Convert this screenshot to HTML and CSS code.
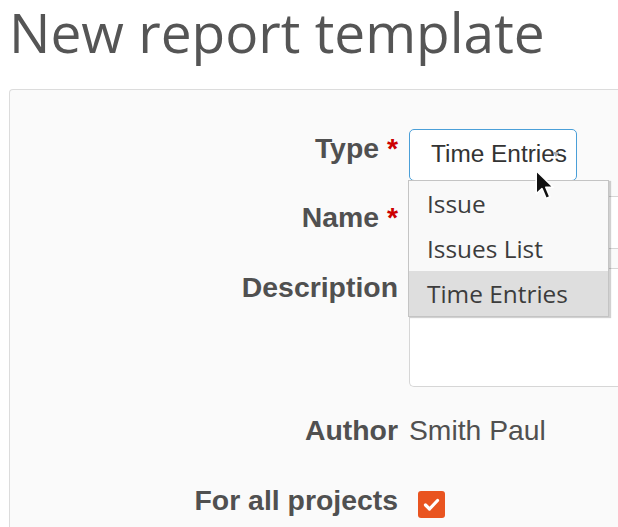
FILE: index.html
```html
<!DOCTYPE html>
<html lang="en">
<head>
    <meta charset="UTF-8">
    <meta name="viewport" content="width=device-width, initial-scale=1.0">
    <title>New report template</title>
    <link rel="stylesheet" href="styles.css">
</head>
<body>
    <h1 class="page-title">New report template</h1>

    <div class="box">
        <div class="row row-type">
            <label class="field-label">Type <span class="required">*</span></label>
            <div class="select-wrap">
                <div class="select">Time Entries</div>
                <ul class="select-menu">
                    <li>Issue</li>
                    <li>Issues List</li>
                    <li class="active">Time Entries</li>
                </ul>
                <!-- mouse pointer over the open list -->
                <svg class="cursor" width="22" height="32" viewBox="0 0 13 20">
                    <path d="M1 1 L1 15.5 L4.6 12.3 L7.2 18.4 L9.6 17.4 L7 11.4 L11.6 11.4 Z" fill="#111" stroke="#fff" stroke-width="1" stroke-linejoin="round"/>
                </svg>
            </div>
        </div>

        <div class="row row-name">
            <label class="field-label">Name <span class="required">*</span></label>
            <div class="input"></div>
        </div>

        <div class="row row-desc">
            <label class="field-label">Description</label>
            <div class="textarea"></div>
        </div>

        <div class="row row-author">
            <label class="field-label">Author</label>
            <div class="value">Smith Paul</div>
        </div>

        <div class="row row-public">
            <label class="field-label">For all projects</label>
            <div class="checkbox">
                <svg width="27" height="27" viewBox="0 0 27 27">
                    <path d="M7.5 14 L11.5 18 L19.5 9.5" fill="none" stroke="#fff" stroke-width="3.2" stroke-linecap="round" stroke-linejoin="round"/>
                </svg>
            </div>
        </div>
    </div>
</body>
</html>
```

FILE: styles.css
```css
body {
    margin: 0;
    background: #fff;
    color: #333;
    font-family: "Liberation Sans", Arial, sans-serif;
    overflow: hidden;
}
.page-title {
    margin: 0 0 25px 0;
    padding-left: 9px;
    font-family: "Open Sans", sans-serif;
    font-weight: normal;
    font-size: 55px;
    line-height: 64px;
    color: #555;
    white-space: nowrap;
}
.box {
    margin-left: 9px;
    border: 1px solid #dcdcdc;
    border-right: none;
    border-radius: 4px 0 0 4px;
    background: #fafafa;
    padding-top: 39px;
    height: 460px;
}
.row {
    display: grid;
    grid-template-columns: 388px 1fr;
    column-gap: 11px;
}
.field-label {
    text-align: right;
    font-weight: bold;
    font-size: 28.4px;
    line-height: 32px;
    color: #505050;
    padding-top: 3px;
    white-space: nowrap;
}
.required {
    color: #c00;
}
.row-type {
    margin-bottom: 15px;
}
.row-name {
    margin-bottom: 19px;
}
.row-name .field-label {
    padding-top: 5px;
}
.row-desc {
    margin-bottom: 27px;
}
.row-author {
    margin-bottom: 38px;
}
.row-author .field-label,
.row-public .field-label {
    padding-top: 0;
}
.select-wrap {
    position: relative;
    height: 52px;
}
.select {
    box-sizing: border-box;
    width: 168px;
    height: 52px;
    padding-left: 21px;
    border: 1px solid #4a9fd8;
    border-radius: 5px;
    background: #fff;
    font-size: 24.4px;
    line-height: 48px;
    color: #333;
    white-space: nowrap;
    overflow: hidden;
    position: relative;
}
.select::after {
    content: "";
    position: absolute;
    left: 143px;
    top: 22px;
    border-left: 3px solid transparent;
    border-right: 3px solid transparent;
    border-top: 5px solid #aaa;
}
.select-menu {
    position: absolute;
    top: 51px;
    left: -1px;
    width: 199px;
    margin: 0;
    padding: 0;
    list-style: none;
    background: #f9f9f9;
    border: 1px solid #c4c4c4;
    box-shadow: 2px 1px 1px rgba(0, 0, 0, 0.18);
    z-index: 2;
}
.select-menu li {
    height: 45px;
    padding-left: 18px;
    font-family: "Open Sans", sans-serif;
    font-size: 24.4px;
    line-height: 45px;
    color: #3c3c3c;
}
.select-menu li.active {
    background: #dedede;
}
.cursor {
    position: absolute;
    left: 125px;
    top: 40px;
    z-index: 3;
}
.input {
    height: 53px;
    box-sizing: border-box;
    border: 1px solid #d6d6d6;
    border-right: none;
    border-radius: 5px 0 0 5px;
    background: #fff;
}
.textarea {
    height: 119px;
    box-sizing: border-box;
    border: 1px solid #d6d6d6;
    border-right: none;
    border-radius: 5px 0 0 5px;
    background: #fff;
}
.value {
    font-size: 28.3px;
    line-height: 32px;
    color: #505050;
}
.checkbox {
    margin: 7px 0 0 9px;
    width: 27px;
    height: 27px;
    border-radius: 3px;
    background: #e95420;
}
.checkbox svg {
    display: block;
}
```
